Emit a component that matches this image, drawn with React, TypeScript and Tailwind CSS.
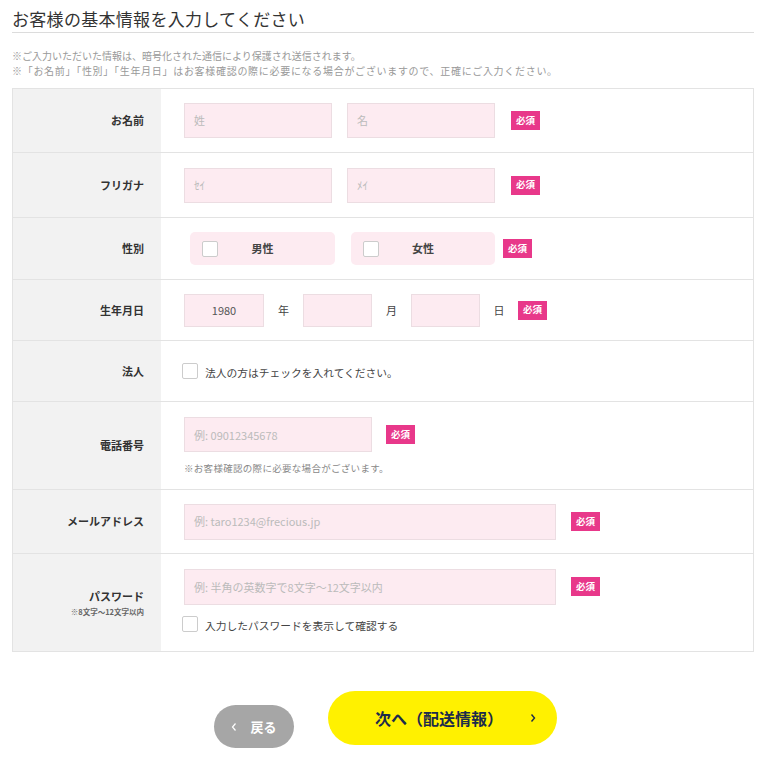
import React from 'react'

const font = { fontFamily: '"Noto Sans CJK JP", "Noto Sans", sans-serif' }

function Required({ className = '' }: { className?: string }) {
    return (
        <span className={`inline-flex h-[19px] w-[29px] items-center justify-center bg-[#e8388a] text-[9.5px] font-bold leading-none text-white ${className}`}>
            必須
        </span>
    )
}

function TextInput({ placeholder, value, className = '' }: { placeholder?: string; value?: string; className?: string }) {
    return (
        <div className={`flex h-[35px] items-center border border-[#ecdde2] bg-[#fdebf1] px-[9px] text-[11px] ${className}`}>
            {value ? <span className="text-[#555]">{value}</span> : <span className="text-[#bbb]">{placeholder}</span>}
        </div>
    )
}

function Checkbox() {
    return <span className="inline-block h-[16px] w-[16px] shrink-0 rounded-[2px] border border-[#ccc] bg-white" />
}

function Row({ label, sub, height, children }: { label: string; sub?: string; height: string; children: React.ReactNode }) {
    return (
        <div className={`flex border-t border-[#e3e3e3] first:border-t-0 ${height}`}>
            <div className="flex w-[148px] shrink-0 flex-col items-end justify-center bg-[#f2f2f2] pr-[17px]">
                <span className="text-[11px] font-bold text-[#333]">{label}</span>
                {sub && <span className="mt-[1px] text-[7.5px] font-bold text-[#666]">{sub}</span>}
            </div>
            <div className="flex flex-1 flex-col justify-center pl-[23px]">{children}</div>
        </div>
    )
}

export default function App() {
    return (
        <div className="min-h-[768px] bg-white pb-[20px]" style={font}>
            <div className="ml-[12px] w-[742px]">
                <h2 className="border-b border-[#dcdcdc] pb-[2px] pt-[7px] text-[17px] leading-[23px] tracking-[0.3px] text-[#333]">
                    お客様の基本情報を入力してください
                </h2>
                <div className="mt-[15px] text-[10px] leading-[15px] text-[#999]">
                    <p>※ご入力いただいた情報は、暗号化された通信により保護され送信されます。</p>
                    <p className="tracking-[0.7px]">※「お名前」「性別」「生年月日」はお客様確認の際に必要になる場合がございますので、正確にご入力ください。</p>
                </div>

                <div className="mt-[10px] border border-[#e3e3e3]">
                    <Row label="お名前" height="h-[63px]">
                        <div className="flex items-center">
                            <TextInput placeholder="姓" className="w-[148px]" />
                            <TextInput placeholder="名" className="ml-[15px] w-[148px]" />
                            <Required className="ml-[16px]" />
                        </div>
                    </Row>
                    <Row label="フリガナ" height="h-[65px]">
                        <div className="flex items-center">
                            <TextInput placeholder="ｾｲ" className="w-[148px]" />
                            <TextInput placeholder="ﾒｲ" className="ml-[15px] w-[148px]" />
                            <Required className="ml-[16px]" />
                        </div>
                    </Row>
                    <Row label="性別" height="h-[62px]">
                        <div className="flex items-center pl-[6px]">
                            <div className="flex h-[33px] w-[145px] items-center rounded-[5px] bg-[#fdebf1] pl-[12px]">
                                <Checkbox />
                                <span className="flex-1 pr-[28px] text-center text-[11px] font-bold text-[#444]">男性</span>
                            </div>
                            <div className="ml-[16px] flex h-[33px] w-[144px] items-center rounded-[5px] bg-[#fdebf1] pl-[12px]">
                                <Checkbox />
                                <span className="flex-1 pr-[28px] text-center text-[11px] font-bold text-[#444]">女性</span>
                            </div>
                            <Required className="ml-[8px]" />
                        </div>
                    </Row>
                    <Row label="生年月日" height="h-[61px]">
                        <div className="flex items-center text-[11px] text-[#444]">
                            <div className="flex h-[33px] w-[80px] items-center justify-center border border-[#ecdde2] bg-[#fdebf1] text-[#555]">1980</div>
                            <span className="w-[39px] text-center">年</span>
                            <div className="h-[33px] w-[69px] border border-[#ecdde2] bg-[#fdebf1]" />
                            <span className="w-[39px] text-center">月</span>
                            <div className="h-[33px] w-[69px] border border-[#ecdde2] bg-[#fdebf1]" />
                            <span className="w-[38px] text-center">日</span>
                            <Required />
                        </div>
                    </Row>
                    <Row label="法人" height="h-[61px]">
                        <div className="flex items-center pt-[4px] text-[10.75px] text-[#444]">
                            <span className="-ml-[2px]"><Checkbox /></span>
                            <span className="ml-[7px]">法人の方はチェックを入れてください。</span>
                        </div>
                    </Row>
                    <Row label="電話番号" height="h-[88px]">
                        <div className="flex items-center pt-[2px]">
                            <TextInput placeholder="例: 09012345678" className="w-[188px]" />
                            <Required className="ml-[14px]" />
                        </div>
                        <p className="mt-[9px] text-[9.5px] tracking-[0.3px] text-[#888]">※お客様確認の際に必要な場合がございます。</p>
                    </Row>
                    <Row label="メールアドレス" height="h-[64px]">
                        <div className="flex items-center">
                            <TextInput placeholder="例: taro1234@frecious.jp" className="w-[372px] h-[36px]" />
                            <Required className="ml-[15px]" />
                        </div>
                    </Row>
                    <Row label="パスワード" sub="※8文字〜12文字以内" height="h-[98px]">
                        <div className="flex items-center">
                            <TextInput placeholder="例: 半角の英数字で8文字〜12文字以内" className="w-[372px] h-[36px]" />
                            <Required className="ml-[15px]" />
                        </div>
                        <div className="mt-[11px] flex items-center text-[10.75px] text-[#444]">
                            <span className="-ml-[2px]"><Checkbox /></span>
                            <span className="ml-[7px]">入力したパスワードを表示して確認する</span>
                        </div>
                    </Row>
                </div>

                <div className="mt-[39px] flex items-start justify-center gap-[34px] pl-[4px]">
                    <button className="mt-[14px] flex h-[43px] w-[80px] items-center justify-center rounded-full bg-[#a6a6a6] text-white">
                        <svg width="8" height="10" viewBox="0 0 8 10" className="mr-[12px]">
                            <path d="M5.5 1.5 L2.5 5 L5.5 8.5" fill="none" stroke="white" strokeWidth="1.2" />
                        </svg>
                        <span className="text-[13px] font-bold">戻る</span>
                    </button>
                    <button className="relative flex h-[54px] w-[229px] items-center justify-center rounded-full bg-[#fff100] text-[#1c2b4b]">
                        <span className="mr-[6px] text-[16px] font-bold">次へ（配送情報）</span>
                        <svg width="8" height="10" viewBox="0 0 8 10" className="absolute right-[20px]">
                            <path d="M2.5 1.5 L5.5 5 L2.5 8.5" fill="none" stroke="#1c2b4b" strokeWidth="1.4" />
                        </svg>
                    </button>
                </div>
            </div>
        </div>
    )
}
